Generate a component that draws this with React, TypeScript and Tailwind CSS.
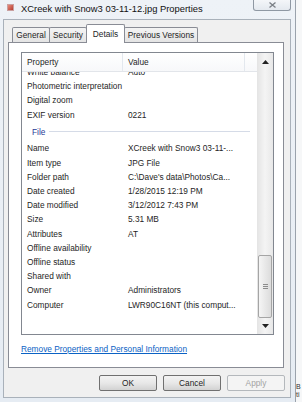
import React from "react";

const font = { fontFamily: '"Liberation Sans", Arial, sans-serif' };

type Row = { name: string; value?: string };

const topRows: Row[] = [
  { name: "White balance", value: "Auto" },
  { name: "Photometric interpretation" },
  { name: "Digital zoom" },
  { name: "EXIF version", value: "0221" },
];

const fileRows: Row[] = [
  { name: "Name", value: "XCreek with Snow3 03-11-..." },
  { name: "Item type", value: "JPG File" },
  { name: "Folder path", value: "C:\\Dave's data\\Photos\\Ca..." },
  { name: "Date created", value: "1/28/2015 12:19 PM" },
  { name: "Date modified", value: "3/12/2012 7:43 PM" },
  { name: "Size", value: "5.31 MB" },
  { name: "Attributes", value: "AT" },
  { name: "Offline availability" },
  { name: "Offline status" },
  { name: "Shared with" },
  { name: "Owner", value: "Administrators" },
  { name: "Computer", value: "LWR90C16NT (this comput..." },
];

function PropRow({ row }: { row: Row }) {
  return (
    <div className="flex h-[14.2px] items-center text-[8.3px] leading-none text-[#1e1e1e]">
      <div className="w-[106px] shrink-0 pl-[5px] whitespace-nowrap">{row.name}</div>
      <div className="whitespace-nowrap">{row.value}</div>
    </div>
  );
}

function Tab({ label, width, selected }: { label: string; width: string; selected?: boolean }) {
  if (selected) {
    return (
      <div
        className={`relative z-10 -mb-px -ml-px flex h-[19px] ${width} items-start justify-center rounded-t-[2px] border border-b-0 border-[#898c95] bg-white pt-[3px] text-[8.3px] text-[#1e1e1e]`}
      >
        {label}
      </div>
    );
  }
  return (
    <div
      className={`-ml-px flex h-[15px] ${width} items-center justify-center rounded-t-[2px] border border-b-0 border-[#898c95] bg-gradient-to-b from-[#f4f4f4] to-[#e4e4e4] text-[8.3px] text-[#1e1e1e]`}
    >
      {label}
    </div>
  );
}

function Button({ label, disabled }: { label: string; disabled?: boolean }) {
  return (
    <div
      className={
        disabled
          ? "flex h-[16px] w-[58px] items-center justify-center rounded-[2px] border border-[#b4b8bc] bg-[#f4f4f4] text-[8.3px] text-[#a3a3a3]"
          : "flex h-[16px] w-[58px] items-center justify-center rounded-[2px] border border-[#707070] bg-gradient-to-b from-[#f3f3f3] via-[#e8e8e8] to-[#d2d2d2] text-[8.3px] text-[#1e1e1e]"
      }
    >
      {label}
    </div>
  );
}

function ScrollBar() {
  return (
    <div className="flex w-[16px] shrink-0 flex-col bg-gradient-to-r from-[#e4e4e4] via-[#f4f4f4] to-[#e8e8e8]">
      <div className="flex h-[17px] items-center justify-center">
        <svg width="7" height="4" viewBox="0 0 7 4">
          <path d="M0 4 L3.5 0 L7 4 Z" fill="#222" />
        </svg>
      </div>
      <div className="h-[185px]" />
      <div className="mx-[1px] flex h-[63px] items-center justify-center rounded-[2px] border border-[#a5a5a5] bg-gradient-to-r from-[#f5f5f5] to-[#dcdcdc]">
        <div className="flex flex-col gap-[1px]">
          <div className="h-px w-[5px] bg-[#8c8c8c]" />
          <div className="h-px w-[5px] bg-[#8c8c8c]" />
          <div className="h-px w-[5px] bg-[#8c8c8c]" />
        </div>
      </div>
      <div className="flex h-[15px] items-center justify-center">
        <svg width="7" height="4" viewBox="0 0 7 4">
          <path d="M0 0 L3.5 4 L7 0 Z" fill="#222" />
        </svg>
      </div>
    </div>
  );
}

function ListView() {
  return (
    <div className="ml-[12px] mt-[9px] flex h-[283px] w-[253px] border border-[#828790] bg-white">
      <div className="flex min-w-0 flex-1 flex-col">
        <div className="flex h-[19px] shrink-0 items-center border-b border-[#e2e5ea] bg-gradient-to-b from-white to-[#f7f8fa] text-[8.3px] text-[#1e1e1e]">
          <div className="flex h-full w-[101px] items-center border-r border-[#e3e8ee] pl-[5px]">Property</div>
          <div className="flex h-full w-[122px] items-center border-r border-[#e3e8ee] pl-[5px]">Value</div>
          <div className="flex-1" />
        </div>
        <div className="flex-1 overflow-hidden">
          <div className="-mt-[7px]">
            {topRows.map((r) => (
              <PropRow key={r.name} row={r} />
            ))}
            <div className="flex h-[19.8px] items-center pl-[10px] pr-[7px]">
              <span className="text-[8.3px] leading-none text-[#1f3b95]">File</span>
              <div className="ml-[4px] h-px flex-1 bg-[#d5dbe7]" />
            </div>
            {fileRows.map((r) => (
              <PropRow key={r.name} row={r} />
            ))}
          </div>
        </div>
      </div>
      <ScrollBar />
    </div>
  );
}

export default function App() {
  return (
    <div className="relative flex h-[402px] w-[302px] overflow-hidden bg-[#f6f7f8]" style={font}>
      {/* window frame */}
      <div className="flex h-full w-[296px] flex-col border-r border-[#9aa2ac] bg-gradient-to-b from-[#eef2f7] to-[#e6ecf3]">
        {/* title bar */}
        <div className="flex h-[19px] shrink-0 items-start">
          <div className="ml-[7px] mt-[4px] h-[7px] w-[7px] border border-[#c9a0a0] bg-gradient-to-br from-[#e88a7a] to-[#b43c32]" />
          <div className="ml-[7px] mt-[2px] whitespace-nowrap text-[9.4px] text-[#111]">
            XCreek with Snow3 03-11-12.jpg Properties
          </div>
          <div className="ml-auto mr-[4px] flex h-[11px] w-[38px] items-center justify-center rounded-b-[3px] border border-t-0 border-[#8f98a3] bg-gradient-to-b from-[#f4f6f9] to-[#e4e9ef]">
            <svg width="7" height="6" viewBox="0 0 7 6">
              <path d="M0.5 0.5 L6.5 5.5 M6.5 0.5 L0.5 5.5" stroke="#7a7f86" strokeWidth="1.3" />
            </svg>
          </div>
        </div>
        {/* client area */}
        <div className="ml-[3px] mr-[4px] flex h-[379px] flex-col border border-[#a9b1ba] bg-[#f0f0f0]">
          <div className="ml-[9px] flex h-[22px] items-end pt-[4px]">
            <Tab label="General" width="w-[38px]" />
            <Tab label="Security" width="w-[38px]" />
            <Tab label="Details" width="w-[39px]" selected />
            <Tab label="Previous Versions" width="w-[74px]" />
          </div>
          <div className="ml-[4px] flex h-[326px] w-[276px] flex-col border border-[#898c95] bg-white">
            <ListView />
            <div className="ml-[12px] mt-[8px] text-[8.3px] leading-[12px] text-[#0b62c4] underline">
              Remove Properties and Personal Information
            </div>
          </div>
          <div className="mt-[7px] flex justify-end gap-[6px] pr-[5px]">
            <Button label="OK" />
            <Button label="Cancel" />
            <Button label="Apply" disabled />
          </div>
        </div>
      </div>
      {/* desktop behind */}
      <div className="flex flex-1 flex-col justify-end pb-[3px] text-[7px] leading-[8px] text-[#333]">
        <div>B</div>
        <div>ti</div>
      </div>
    </div>
  );
}
